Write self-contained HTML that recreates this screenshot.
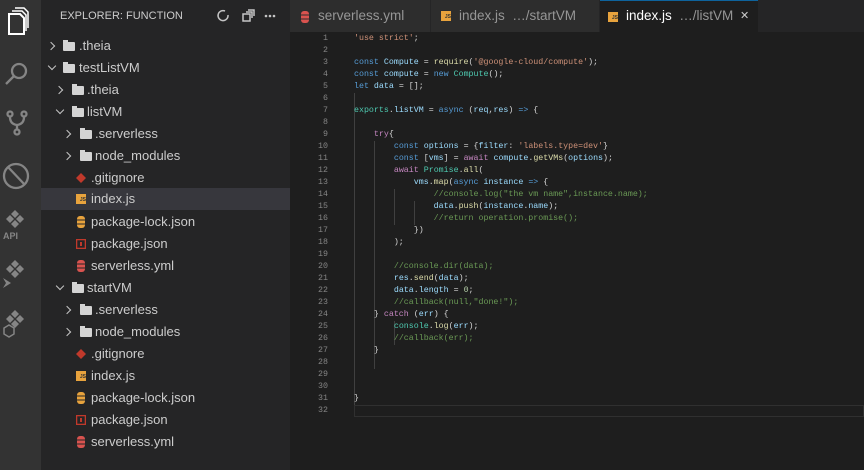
<!DOCTYPE html>
<html><head><style>
*{margin:0;padding:0;box-sizing:border-box}
html,body{width:864px;height:470px;overflow:hidden}
body{background:#1e1e1e;position:relative;font-family:"Liberation Sans",sans-serif}
#act{position:absolute;left:0;top:0;width:41px;height:470px;background:#333333}
#side{position:absolute;left:41px;top:0;width:249px;height:470px;background:#252526}
.hdr{position:absolute;left:19px;top:10px;font-size:11px;color:#cccccc}
.row{position:absolute;left:0;width:249px;height:22px;font-size:13px;color:#cccccc;line-height:22px}
.row span{position:absolute;top:0}
.sel{background:#37373d}
.chev{width:6px;height:6px;border-right:1.2px solid #c5c5c5;border-bottom:1.2px solid #c5c5c5;position:absolute}
.c{transform:rotate(-45deg);top:8px}
.o{transform:rotate(45deg);top:6px}
.fold{position:absolute;top:7px;width:12px;height:9px;background:#d4d4d4;border-radius:1px}
.fold:before{content:"";position:absolute;left:0;top:-2px;width:5px;height:3px;background:#d4d4d4}
#tabs{position:absolute;left:290px;top:0;width:574px;height:32px;background:#252526}
.tab{position:absolute;top:0;height:32px;background:#2d2d2d;color:#969696;font-size:13.5px;line-height:32px}
.js{display:inline-block;width:10px;height:10px;background:#e8a33d;color:#333;font-size:5px;line-height:13px;text-align:right;font-weight:bold;font-style:normal;overflow:hidden}
#ed{position:absolute;left:290px;top:33px;width:574px;height:437px;font-family:"Liberation Mono",monospace;font-size:8.3px}
.ln{position:absolute;left:0;width:38px;text-align:right;color:#858585;height:12px;line-height:12px}
.cd{position:absolute;left:64px;height:12px;line-height:12px;color:#d4d4d4;white-space:pre}
.k{color:#569cd6}.v{color:#9cdcfe}.s{color:#ce9178}.f{color:#dcdcaa}.t{color:#4ec9b0}.m{color:#6a9955}.p{color:#c586c0}.n{color:#b5cea8}
.g{position:absolute;width:1px;background:#404040}
</style></head><body>
<div id="act">
<svg width="41" height="470" viewBox="0 0 41 470">
<g fill="none" stroke="#fff" stroke-width="2"><path d="M9 14h11l4 4v16H9z"/><path d="M12 11h10l4 4v16" stroke-width="1.5"/><path d="M15 8h9l4 4v16" stroke-width="1.5"/></g>
<g fill="none" stroke="#858585" stroke-width="2.3"><circle cx="19" cy="71" r="7"/><path d="M14 76l-8 8"/>
<circle cx="10" cy="114" r="2.5"/><circle cx="24" cy="114" r="2.5"/><circle cx="17" cy="132" r="2.5"/><path d="M10 117q0 7 7 8q7-1 7-8M17 125v4"/>
<circle cx="16" cy="176" r="12"/><path d="M8 167l17 18"/></g>
<g fill="#858585">
<path id="d" d="M11 214l4-4l4 4l-4 4zM6 219l4-4l4 4l-4 4zM16 219l4-4l4 4l-4 4zM11 224l4-4l4 4l-4 4z"/>
<text x="3" y="239" font-size="9" font-weight="bold" font-family="Liberation Sans">API</text>
<path d="M11 264l4-4l4 4l-4 4zM6 269l4-4l4 4l-4 4zM16 269l4-4l4 4l-4 4zM11 274l4-4l4 4l-4 4z"/>
<path d="M3 278l8 5l-8 5l3-5z"/>
<path d="M11 314l4-4l4 4l-4 4zM6 319l4-4l4 4l-4 4zM16 319l4-4l4 4l-4 4zM11 324l4-4l4 4l-4 4z"/>
</g>
<path d="M9 127l0 0M9 325l5 3v6l-5 3l-5-3v-6z" fill="none" stroke="#858585" stroke-width="1.5"/>
</svg>
</div>
<div id="side">
<div class="hdr">EXPLORER: FUNCTION</div>
<svg style="position:absolute;left:170px;top:6px" width="75" height="20"><g fill="none" stroke="#c5c5c5" stroke-width="1.5"><path d="M14 5a5 5 0 1 0 3 4"/><rect x="32" y="8" width="7" height="7"/><path d="M35 6h6v6M37 4h6v6"/></g><g fill="#c5c5c5"><circle cx="55" cy="10" r="1.3"/><circle cx="59" cy="10" r="1.3"/><circle cx="63" cy="10" r="1.3"/></g></svg>

<div class="row" style="top:35px"><i class="chev c" style="left:7px"></i><i class="fold" style="left:22px"></i><span style="left:38px">.theia</span></div>
<div class="row" style="top:57px"><i class="chev o" style="left:8px"></i><i class="fold" style="left:22px"></i><span style="left:38px">testListVM</span></div>
<div class="row" style="top:79px"><i class="chev c" style="left:15px"></i><i class="fold" style="left:31px"></i><span style="left:46px">.theia</span></div>
<div class="row" style="top:101px"><i class="chev o" style="left:16px"></i><i class="fold" style="left:31px"></i><span style="left:46px">listVM</span></div>
<div class="row" style="top:123px"><i class="chev c" style="left:23px"></i><i class="fold" style="left:39px"></i><span style="left:54px">.serverless</span></div>
<div class="row" style="top:145px"><i class="chev c" style="left:23px"></i><i class="fold" style="left:39px"></i><span style="left:54px">node_modules</span></div>
<div class="row" style="top:167px"><svg style="position:absolute;left:35px;top:6px" width="10" height="10"><path d="M5 0l5 5l-5 5l-5-5z" fill="#c0392b"/></svg><span style="left:50px">.gitignore</span></div>
<div class="row sel" style="top:188px;height:22px"><i class="js" style="position:absolute;left:35px;top:6px">JS</i><span style="left:50px">index.js</span></div>
<div class="row" style="top:211px"><svg style="position:absolute;left:35px;top:5px" width="10" height="12"><rect x="1" y="0" width="8" height="12" rx="3" fill="#e8a33d"/><path d="M1 4h8M1 8h8" stroke="#252526"/></svg><span style="left:50px">package-lock.json</span></div>
<div class="row" style="top:233px"><svg style="position:absolute;left:35px;top:6px" width="10" height="10"><rect x="0.5" y="0.5" width="9" height="9" fill="none" stroke="#c0392b" stroke-width="1.6"/><rect x="4" y="3" width="2" height="4" fill="#c0392b"/></svg><span style="left:50px">package.json</span></div>
<div class="row" style="top:255px"><svg style="position:absolute;left:35px;top:5px" width="10" height="12"><rect x="1" y="0" width="8" height="12" rx="3" fill="#d9534f"/><path d="M1 4h8M1 8h8" stroke="#252526"/></svg><span style="left:50px">serverless.yml</span></div>
<div class="row" style="top:277px"><i class="chev o" style="left:16px"></i><i class="fold" style="left:31px"></i><span style="left:46px">startVM</span></div>
<div class="row" style="top:299px"><i class="chev c" style="left:23px"></i><i class="fold" style="left:39px"></i><span style="left:54px">.serverless</span></div>
<div class="row" style="top:321px"><i class="chev c" style="left:23px"></i><i class="fold" style="left:39px"></i><span style="left:54px">node_modules</span></div>
<div class="row" style="top:343px"><svg style="position:absolute;left:35px;top:6px" width="10" height="10"><path d="M5 0l5 5l-5 5l-5-5z" fill="#c0392b"/></svg><span style="left:50px">.gitignore</span></div>
<div class="row" style="top:365px"><i class="js" style="position:absolute;left:35px;top:6px">JS</i><span style="left:50px">index.js</span></div>
<div class="row" style="top:387px"><svg style="position:absolute;left:35px;top:5px" width="10" height="12"><rect x="1" y="0" width="8" height="12" rx="3" fill="#e8a33d"/><path d="M1 4h8M1 8h8" stroke="#252526"/></svg><span style="left:50px">package-lock.json</span></div>
<div class="row" style="top:409px"><svg style="position:absolute;left:35px;top:6px" width="10" height="10"><rect x="0.5" y="0.5" width="9" height="9" fill="none" stroke="#c0392b" stroke-width="1.6"/><rect x="4" y="3" width="2" height="4" fill="#c0392b"/></svg><span style="left:50px">package.json</span></div>
<div class="row" style="top:431px"><svg style="position:absolute;left:35px;top:5px" width="10" height="12"><rect x="1" y="0" width="8" height="12" rx="3" fill="#d9534f"/><path d="M1 4h8M1 8h8" stroke="#252526"/></svg><span style="left:50px">serverless.yml</span></div>
</div>
<div id="tabs">
<div class="tab" style="left:0;width:140px"><svg style="position:absolute;left:10px;top:11px" width="10" height="12"><rect x="1" y="0" width="8" height="12" rx="3" fill="#d9534f"/><path d="M1 4h8M1 8h8" stroke="#2d2d2d"/></svg><span style="position:absolute;left:28px">serverless.yml</span></div>
<div class="tab" style="left:141px;width:168px"><i class="js" style="position:absolute;left:10px;top:11px">JS</i><span style="position:absolute;left:28px">index.js &nbsp;…/startVM</span></div>
<div class="tab" style="left:310px;width:158px;background:#1e1e1e;color:#fff;border-top:1px solid #0e639c"><i class="js" style="position:absolute;left:8px;top:11px">JS</i><span style="position:absolute;left:26px;top:-1px">index.js <span style="color:#969696">&nbsp;…/listVM</span></span><span style="position:absolute;left:140px;top:-1px;color:#ccc;font-size:11px">✕</span></div>
</div>
<div id="ed">
<div class="g" style="left:64px;top:60px;height:312px"></div>
<div class="g" style="left:84px;top:108px;height:228px"></div>
<div class="g" style="left:104px;top:156px;height:36px"></div>
<div class="g" style="left:124px;top:168px;height:24px"></div>
<div class="g" style="left:104px;top:288px;height:24px"></div>
<div style="position:absolute;left:64px;top:372px;width:510px;height:12px;border:1px solid #303030"></div>
<div class="ln" style="top:0">1</div><div class="cd" style="top:0"><span class="s">'use strict'</span>;</div>
<div class="ln" style="top:12px">2</div>
<div class="ln" style="top:24px">3</div><div class="cd" style="top:24px"><span class="k">const</span> <span class="v">Compute</span> = <span class="f">require</span>(<span class="s">'@google-cloud/compute'</span>);</div>
<div class="ln" style="top:36px">4</div><div class="cd" style="top:36px"><span class="k">const</span> <span class="v">compute</span> = <span class="k">new</span> <span class="t">Compute</span>();</div>
<div class="ln" style="top:48px">5</div><div class="cd" style="top:48px"><span class="k">let</span> <span class="v">data</span> = [];</div>
<div class="ln" style="top:60px">6</div>
<div class="ln" style="top:72px">7</div><div class="cd" style="top:72px"><span class="t">exports</span>.<span class="v">listVM</span> = <span class="k">async</span> (<span class="v">req</span>,<span class="v">res</span>) <span class="k">=&gt;</span> {</div>
<div class="ln" style="top:84px">8</div>
<div class="ln" style="top:96px">9</div><div class="cd" style="top:96px">    <span class="p">try</span>{</div>
<div class="ln" style="top:108px">10</div><div class="cd" style="top:108px">        <span class="k">const</span> <span class="v">options</span> = {<span class="v">filter</span>: <span class="s">'labels.type=dev'</span>}</div>
<div class="ln" style="top:120px">11</div><div class="cd" style="top:120px">        <span class="k">const</span> [<span class="v">vms</span>] = <span class="p">await</span> <span class="v">compute</span>.<span class="f">getVMs</span>(<span class="v">options</span>);</div>
<div class="ln" style="top:132px">12</div><div class="cd" style="top:132px">        <span class="p">await</span> <span class="t">Promise</span>.<span class="f">all</span>(</div>
<div class="ln" style="top:144px">13</div><div class="cd" style="top:144px">            <span class="v">vms</span>.<span class="f">map</span>(<span class="k">async</span> <span class="v">instance</span> <span class="k">=&gt;</span> {</div>
<div class="ln" style="top:156px">14</div><div class="cd" style="top:156px">                <span class="m">//console.log("the vm name",instance.name);</span></div>
<div class="ln" style="top:168px">15</div><div class="cd" style="top:168px">                <span class="v">data</span>.<span class="f">push</span>(<span class="v">instance</span>.<span class="v">name</span>);</div>
<div class="ln" style="top:180px">16</div><div class="cd" style="top:180px">                <span class="m">//return operation.promise();</span></div>
<div class="ln" style="top:192px">17</div><div class="cd" style="top:192px">            })</div>
<div class="ln" style="top:204px">18</div><div class="cd" style="top:204px">        );</div>
<div class="ln" style="top:216px">19</div>
<div class="ln" style="top:228px">20</div><div class="cd" style="top:228px">        <span class="m">//console.dir(data);</span></div>
<div class="ln" style="top:240px">21</div><div class="cd" style="top:240px">        <span class="v">res</span>.<span class="f">send</span>(<span class="v">data</span>);</div>
<div class="ln" style="top:252px">22</div><div class="cd" style="top:252px">        <span class="v">data</span>.<span class="v">length</span> = <span class="n">0</span>;</div>
<div class="ln" style="top:264px">23</div><div class="cd" style="top:264px">        <span class="m">//callback(null,"done!");</span></div>
<div class="ln" style="top:276px">24</div><div class="cd" style="top:276px">    } <span class="p">catch</span> (<span class="v">err</span>) {</div>
<div class="ln" style="top:288px">25</div><div class="cd" style="top:288px">        <span class="t">console</span>.<span class="f">log</span>(<span class="v">err</span>);</div>
<div class="ln" style="top:300px">26</div><div class="cd" style="top:300px">        <span class="m">//callback(err);</span></div>
<div class="ln" style="top:312px">27</div><div class="cd" style="top:312px">    }</div>
<div class="ln" style="top:324px">28</div>
<div class="ln" style="top:336px">29</div>
<div class="ln" style="top:348px">30</div>
<div class="ln" style="top:360px">31</div><div class="cd" style="top:360px">}</div>
<div class="ln" style="top:372px">32</div>
</div>
</body></html>
